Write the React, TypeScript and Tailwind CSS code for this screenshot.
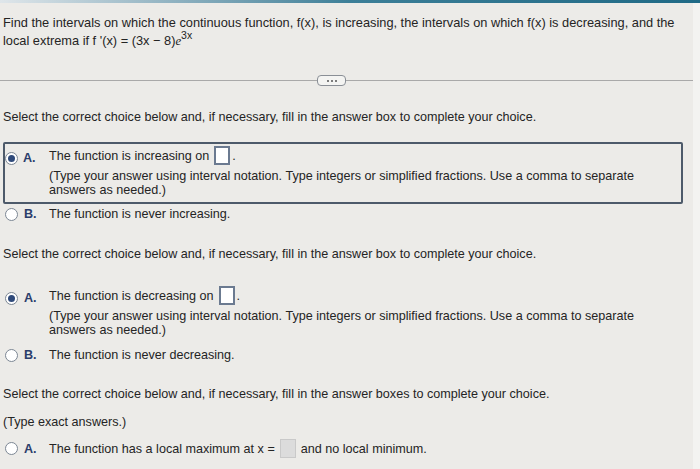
import React from 'react';

const Radio: React.FC<{ checked?: boolean }> = ({ checked }) => (
  <span className="flex h-[13px] w-[13px] shrink-0 items-center justify-center rounded-full border border-[#7c8794] bg-white">
    {checked && <span className="h-[7px] w-[7px] rounded-full bg-[#2f4a7a]" />}
  </span>
);

const AnswerBox: React.FC<{ filled?: boolean }> = ({ filled }) => (
  <span
    className={`ml-[5px] mr-[2px] inline-block h-[19px] w-[16px] ${
      filled ? 'border border-[#c9c9c9] bg-[#dcdcdc]' : 'border-2 border-[#6b7a90] bg-white'
    }`}
  />
);

const Label: React.FC<{ checked?: boolean; letter: string }> = ({ checked, letter }) => (
  <div className="flex w-[49px] shrink-0 items-center gap-[6px] pl-[5px]">
    <Radio checked={checked} />
    <span className="font-bold text-[#2b3d6b]">{letter}.</span>
  </div>
);

const App: React.FC = () => {
  return (
    <div className="relative h-[469px] w-[700px] overflow-hidden bg-[#ecebe8] font-['Liberation_Sans',Arial,sans-serif] text-[12.6px] leading-[18px] text-[#242424]">
      {/* top bar */}
      <div className="h-[3px] w-full bg-gradient-to-r from-[#dfe6ea] via-[#3c7f98] to-[#1f6a86]" />

      {/* question */}
      <div className="px-[3px] pt-[11px] text-[12.8px]">
        <p>Find the intervals on which the continuous function, f(x), is increasing, the intervals on which f(x) is decreasing, and the</p>
        <p>
          local extrema if f '(x) = (3x − 8)
          <span className="font-['Liberation_Serif',serif] italic">e</span>
          <span className="relative -top-[6px] text-[10.5px]">3x</span>
        </p>
      </div>

      {/* divider */}
      <div className="mt-[25px] flex items-center">
        <div className="h-px flex-1 bg-[#a9a9a9]" />
        <div className="flex h-[11px] w-[29px] items-center justify-center gap-[2px] rounded-[4px] border border-[#8a8f96] bg-[#f4f4f2]">
          <span className="h-[2px] w-[2px] rounded-full bg-[#555]" />
          <span className="h-[2px] w-[2px] rounded-full bg-[#555]" />
          <span className="h-[2px] w-[2px] rounded-full bg-[#555]" />
        </div>
        <div className="h-px w-[354px] bg-[#a9a9a9]" />
      </div>

      {/* part 1 */}
      <p className="mt-[22px] px-[3px]">Select the correct choice below and, if necessary, fill in the answer box to complete your choice.</p>

      <div className="ml-[3px] mt-[16px] w-[680px] rounded-[2px] border-2 border-[#4d5a6a] pb-[5px] pt-[2px]">
        <div className="flex items-start">
          <div className="flex w-[44px] shrink-0 items-center gap-[5px] pt-[3px]">
            <Radio checked />
            <span className="font-bold text-[#2b3d6b]">A.</span>
          </div>
          <div>
            <p className="flex items-center">
              The function is increasing on <AnswerBox />.
            </p>
            <p className="mt-[4px] leading-[14px]">(Type your answer using interval notation. Type integers or simplified fractions. Use a comma to separate</p>
            <p className="leading-[14px]">answers as needed.)</p>
          </div>
        </div>
      </div>
      <div className="mt-[1px] flex items-center">
        <Label letter="B" />
        <span>The function is never increasing.</span>
      </div>

      {/* part 2 */}
      <p className="mt-[22px] px-[3px]">Select the correct choice below and, if necessary, fill in the answer box to complete your choice.</p>

      <div className="mt-[23px] flex items-start">
        <div className="pt-[3px]">
          <Label letter="A" checked />
        </div>
        <div>
          <p className="flex items-center">
            The function is decreasing on <AnswerBox />.
          </p>
          <p className="mt-[4px] leading-[14px]">(Type your answer using interval notation. Type integers or simplified fractions. Use a comma to separate</p>
          <p className="leading-[14px]">answers as needed.)</p>
        </div>
      </div>
      <div className="mt-[9px] flex items-center">
        <Label letter="B" />
        <span>The function is never decreasing.</span>
      </div>

      {/* part 3 */}
      <p className="mt-[21px] px-[3px]">Select the correct choice below and, if necessary, fill in the answer boxes to complete your choice.</p>
      <p className="mt-[10px] px-[3px]">(Type exact answers.)</p>
      <div className="mt-[8px] flex items-center">
        <Label letter="A" />
        <span className="flex items-center">
          The function has a local maximum at x = <AnswerBox filled />
          <span className="ml-[3px]">and no local minimum.</span>
        </span>
      </div>

      {/* right edge of the screen */}
      <div className="absolute right-0 top-[3px] h-full w-[7px] bg-[#f3f3f1]" />
    </div>
  );
};

export default App;
